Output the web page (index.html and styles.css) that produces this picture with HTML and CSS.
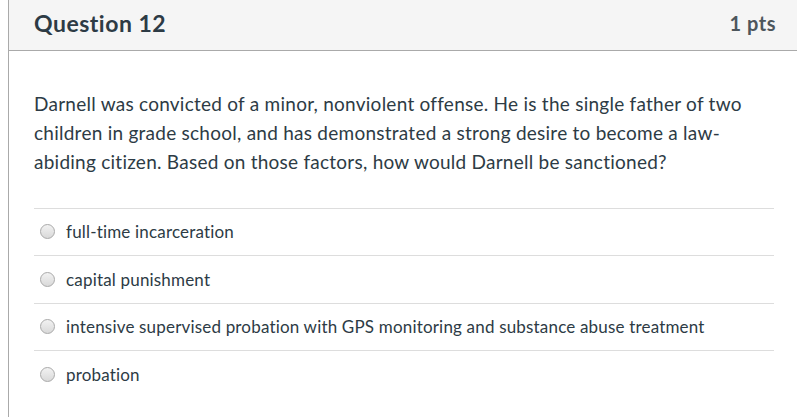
FILE: index.html
```html
<!DOCTYPE html>
<html>
<head>
<meta charset="utf-8">
<link rel="stylesheet" href="styles.css">
</head>
<body>
<div class="card">
  <div class="header">
    <h2 class="title">Question 12</h2>
    <div class="pts">1 pts</div>
  </div>
  <div class="content">
    <p class="question">Darnell was convicted of a minor, nonviolent offense. He is the single father of two children in grade school, and has demonstrated a strong desire to become a law-abiding citizen. Based on those factors, how would Darnell be sanctioned?</p>
    <div class="answers">
      <div class="answer"><span class="radio"></span><span class="label">full-time incarceration</span></div>
      <div class="answer"><span class="radio"></span><span class="label">capital punishment</span></div>
      <div class="answer"><span class="radio"></span><span class="label">intensive supervised probation with GPS monitoring and substance abuse treatment</span></div>
      <div class="answer"><span class="radio"></span><span class="label">probation</span></div>
    </div>
  </div>
</div>
</body>
</html>
```
FILE: styles.css
```css
html, body {
  margin: 0;
  padding: 0;
  background: #fff;
}
body {
  font-family: Lato, "Open Sans", sans-serif;
  color: #2d3b45;
}
.card {
  margin-left: 8px;
  border-left: 1px solid #aaaaaa;
  min-height: 417px;
  width: 800px;
}
.header {
  height: 51px;
  box-sizing: border-box;
  background: #f5f5f5;
  border-bottom: 1px solid #aaaaaa;
  display: flex;
  align-items: center;
  justify-content: space-between;
  padding: 0 22px 4px 25px;
  width: 789px;
}
.title {
  margin: 0;
  font-size: 23px;
  font-weight: 700;
  line-height: 1;
  letter-spacing: 0.5px;
}
.pts {
  font-size: 20px;
  font-weight: 700;
  color: #4d565c;
  letter-spacing: 0.5px;
}
.content {
  padding: 38px 0 0 25px;
  width: 740px;
}
.question {
  margin: 0 0 31.5px 0;
  font-size: 19px;
  line-height: 29px;
  letter-spacing: 0.25px;
}
.answer {
  display: flex;
  align-items: center;
  height: 47.5px;
  box-sizing: border-box;
  border-top: 1px solid #dddddd;
  padding-left: 6px;
}
.radio {
  width: 13px;
  height: 13px;
  border-radius: 50%;
  border: 1px solid #a9a9a9;
  background: linear-gradient(#f2f2f2, #d9d9d9);
  margin-right: 11px;
  flex: none;
}
.label {
  font-size: 17px;
  letter-spacing: 0.18px;
}
```
